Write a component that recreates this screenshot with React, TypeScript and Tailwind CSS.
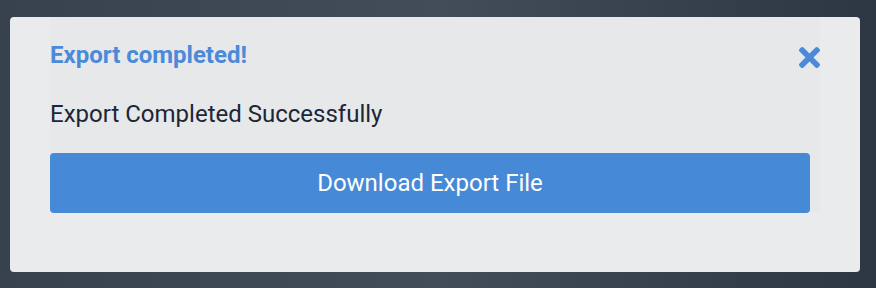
import React from "react";

function CloseIcon() {
  return (
    <svg viewBox="0 80 352 352" width="21" height="21" fill="#4a8ad8" aria-hidden="true">
      <path d="M242.72 256l100.07-100.07c12.28-12.28 12.28-32.19 0-44.48l-22.24-22.24c-12.28-12.28-32.19-12.28-44.48 0L176 189.28 75.93 89.21c-12.28-12.28-32.19-12.28-44.48 0L9.21 111.45c-12.28 12.28-12.28 32.19 0 44.48L109.28 256 9.21 356.07c-12.28 12.28-12.28 32.19 0 44.48l22.24 22.24c12.28 12.28 32.2 12.28 44.48 0L176 322.72l100.07 100.07c12.28 12.28 32.2 12.28 44.48 0l22.24-22.24c12.28-12.28 12.28-32.19 0-44.48L242.72 256z" />
    </svg>
  );
}

export default function App() {
  return (
    <div
      className="w-[876px] h-[288px] overflow-hidden bg-gradient-to-r from-[#38414e] via-[#434c59] to-[#2d3643] pt-[17px] pl-[10px]"
      style={{ fontFamily: "Roboto, 'Liberation Sans', sans-serif" }}
    >
      <div className="w-[850px] h-[255px] rounded-[4px] bg-[#eaebed] pl-[40px]">
        <div className="w-[770px] h-[195px] bg-[#e6e8ea] pt-[26px]">
          <div className="flex items-start justify-between">
            <h2 className="text-[24px] font-bold text-[#4a8ad8] leading-none">Export completed!</h2>
            <div className="mt-[4px]">
              <CloseIcon />
            </div>
          </div>
          <p className="mt-[34px] text-[24px] leading-none text-[#1b2638]">Export Completed Successfully</p>
          <button className="mt-[27px] w-[760px] h-[60px] rounded-[4px] bg-[#4689d6] text-white text-[24px] leading-none flex items-center justify-center">
            Download Export File
          </button>
        </div>
      </div>
    </div>
  );
}
